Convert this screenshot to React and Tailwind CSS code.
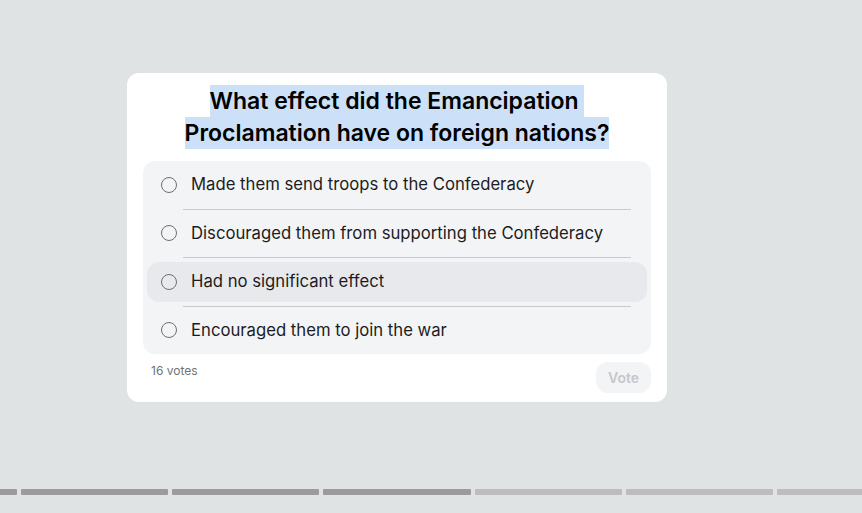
import React from "react";

const options = [
  "Made them send troops to the Confederacy",
  "Discouraged them from supporting the Confederacy",
  "Had no significant effect",
  "Encouraged them to join the war",
];

// progress strip along the bottom: first four done, rest pending
const segments = [true, true, true, true, false, false, false];

function Radio() {
  return (
    <span className="block w-4 h-4 rounded-full border-[1.5px] border-[#6b6f75] shrink-0" />
  );
}

export default function App() {
  const hovered = 2;

  return (
    <div
      className="w-[862px] h-[513px] bg-[#e0e3e4] overflow-hidden flex flex-col"
      style={{ fontFamily: "Inter, 'Noto Sans', sans-serif" }}
    >
      <div className="pl-[127px] pt-[73px]">
        <div className="w-[540px] bg-white rounded-xl px-4 pt-3 pb-[9px]">
          <h2 className="text-center text-[23px] font-semibold text-black leading-[32px]">
            <span className="inline-block bg-[#cce0f8]">What effect did the Emancipation&nbsp;</span>
            <br />
            <span className="inline-block bg-[#cce0f8]">Proclamation have on foreign nations?</span>
          </h2>

          <div className="mt-3 bg-[#f3f4f6] rounded-xl flex flex-col">
            {options.map((opt, i) => (
              <React.Fragment key={opt}>
                {i > 0 && <div className="h-px ml-10 mr-5 bg-[#c8c9cc]" />}
                <div className="p-1">
                  <div
                    className={`h-[39.5px] rounded-xl flex items-center gap-[14px] pl-[14px] ${
                      i === hovered ? "bg-[#e8e9ec]" : ""
                    }`}
                  >
                    <Radio />
                    <span className="text-[16.7px] text-[#1c1c1e]">{opt}</span>
                  </div>
                </div>
              </React.Fragment>
            ))}
          </div>

          <div className="flex justify-between items-start">
            <span className="pl-2 pt-[9px] text-xs text-[#6f7378]">16 votes</span>
            <button className="mt-2 w-[55px] h-[31px] rounded-xl bg-[#f3f4f6] text-sm font-semibold text-[#c5c7cb]">
              Vote
            </button>
          </div>
        </div>
      </div>

      <div className="mt-[87px] flex gap-1 ml-[-130.2px]">
        {segments.map((done, i) => (
          <div
            key={i}
            className={`w-[147.2px] h-[6px] rounded-[1px] shrink-0 ${
              done ? "bg-[#9b9b9b]" : "bg-[#bdbdbd]"
            }`}
          />
        ))}
      </div>
    </div>
  );
}
